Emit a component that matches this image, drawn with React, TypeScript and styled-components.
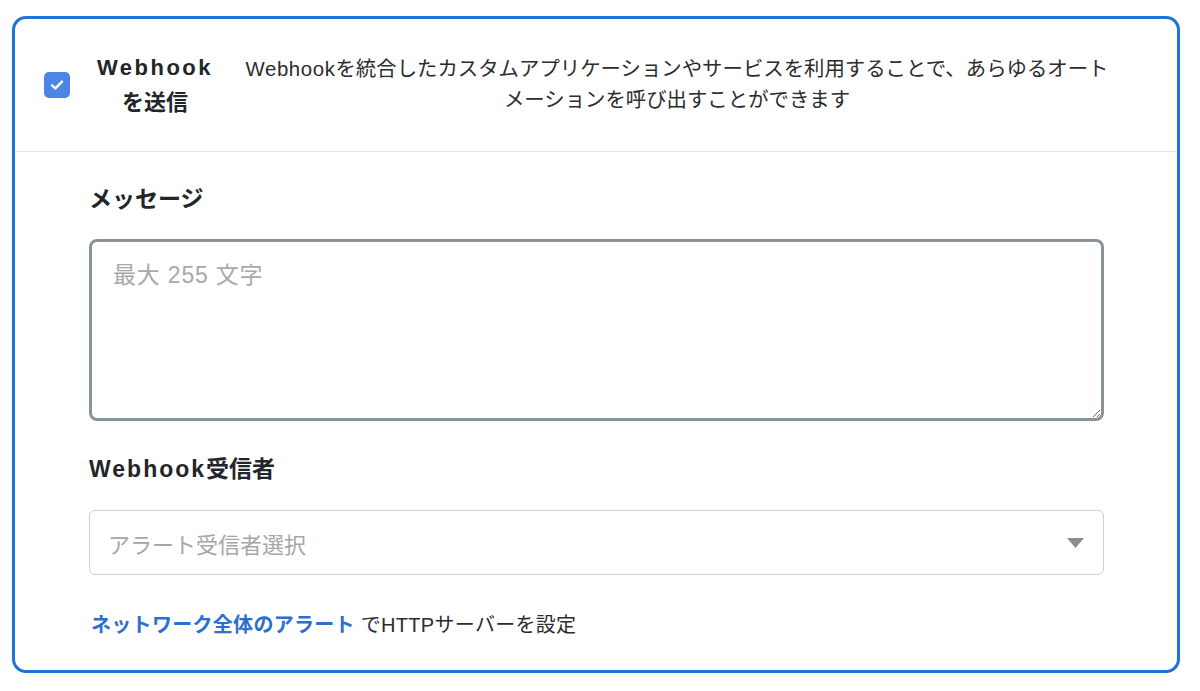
import React from "react";
import styled, { createGlobalStyle } from "styled-components";

const Global = createGlobalStyle`
  * { box-sizing: border-box; }
  html, body { margin: 0; padding: 0; background: #ffffff; }
  body {
    font-family: "Liberation Sans", "Noto Sans CJK JP", sans-serif;
    color: #222529;
  }
`;

const Page = styled.div`
  padding: 16px 20px 18px 12px;
`;

const Card = styled.section`
  width: 1168px;
  height: 657px;
  border: 3px solid #1c74d8;
  border-radius: 14px;
  overflow: hidden;
  display: flex;
  flex-direction: column;
  background: #fff;
`;

const Header = styled.header`
  height: 133px;
  flex: none;
  display: flex;
  align-items: center;
  padding-left: 29px;
  border-bottom: 1px solid #e3e6e9;
`;

const CheckBox = styled.span`
  width: 26px;
  height: 26px;
  border-radius: 5px;
  background: #4b86e6;
  display: flex;
  align-items: center;
  justify-content: center;
  flex: none;
`;

const Title = styled.h2`
  margin: 0 0 0 22px;
  width: 126px;
  flex: none;
  font-size: 22px;
  font-weight: 700;
  line-height: 35px;
  text-align: center;
  color: #222529;
`;

const Wide = styled.span<{ $ls: number }>`
  letter-spacing: ${(p) => p.$ls}px;
`;

const Description = styled.p`
  margin: 0 0 0 12px;
  width: 894px;
  flex: none;
  font-size: 20.4px;
  line-height: 31px;
  text-align: center;
  color: #2a2c2f;
`;

const Body = styled.div`
  padding: 32px 74px 0 74px;
  display: flex;
  flex-direction: column;
`;

const Label = styled.label<{ $gap: number }>`
  display: block;
  font-size: 23px;
  font-weight: 700;
  line-height: 30px;
  color: #222529;
  margin-bottom: ${(p) => p.$gap}px;
`;

const TextArea = styled.textarea`
  width: 1015px;
  height: 182px;
  border: 3px solid #8a929b;
  border-radius: 8px;
  padding: 18px 21px;
  font-family: "Liberation Sans", "Noto Sans CJK JP", sans-serif;
  font-size: 23px;
  line-height: 30px;
  letter-spacing: 0.8px;
  color: #222;
  resize: vertical;
  outline: none;
  margin-bottom: 33px;
  &::placeholder { color: #a9a9a9; }
`;

const Select = styled.div`
  width: 1015px;
  height: 65px;
  border: 1px solid #cfcfcf;
  border-radius: 6px;
  display: flex;
  align-items: center;
  justify-content: space-between;
  padding: 0 19px 0 18px;
  margin-bottom: 36px;
`;

const Placeholder = styled.span`
  font-size: 22px;
  color: #a6a6a6;
`;

const Footer = styled.p`
  margin: 0;
  font-size: 20px;
  line-height: 28px;
  color: #2a2c2f;
  padding-left: 2px;
  letter-spacing: 0.3px;
`;

const Link = styled.a`
  color: #2c6fd0;
  font-weight: 700;
  text-decoration: none;
`;

export default function App() {
  return (
    <>
      <Global />
      <Page>
        <Card>
          <Header>
            <CheckBox>
              <svg width="14" height="12" viewBox="0 0 14 12">
                <path d="M2 6.3 L5.4 9.4 L12 2.6" fill="none" stroke="#fff" strokeWidth="2.4" strokeLinecap="round" strokeLinejoin="round" />
              </svg>
            </CheckBox>
            <Title>
              <Wide $ls={2.5}>Webhook</Wide>
              <br />
              を送信
            </Title>
            <Description>
              <Wide $ls={0.6}>Webhook</Wide>を統合したカスタムアプリケーションやサービスを利用することで、あらゆるオート
              <br />
              メーションを呼び出すことができます
            </Description>
          </Header>
          <Body>
            <Label $gap={25}>メッセージ</Label>
            <TextArea placeholder="最大 255 文字" />
            <Label $gap={26}>
              <Wide $ls={2}>Webhook</Wide>受信者
            </Label>
            <Select>
              <Placeholder>アラート受信者選択</Placeholder>
              <svg width="17" height="10" viewBox="0 0 17 10">
                <path d="M0 0 H17 L8.5 10 Z" fill="#8c8c8c" />
              </svg>
            </Select>
            <Footer>
              <Link href="#">ネットワーク全体のアラート</Link> でHTTPサーバーを設定
            </Footer>
          </Body>
        </Card>
      </Page>
    </>
  );
}
